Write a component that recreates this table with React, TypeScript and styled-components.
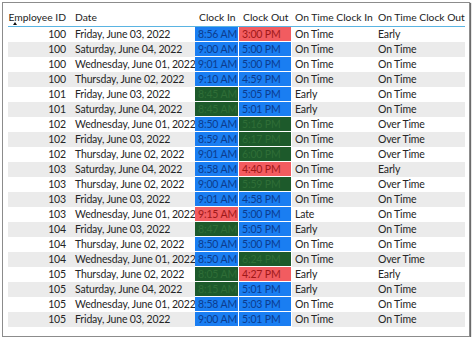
import styled, { createGlobalStyle } from "styled-components";

const Global = createGlobalStyle`
  body {
    margin: 0;
    background: #ffffff;
    font-family: "Lato", "Open Sans", sans-serif;
  }
`;

const Frame = styled.div`
  margin: 2px 0 0 2px;
  height: 333px;
  border: 1px solid #8c8c8c;
  box-shadow: 1px 1px 1px #6a6a6a;
  padding: 0 4px 0 5px;
  box-sizing: content-box;
  width: 457px;
`;

const cols = "62px 125px 44px 53px 82px 91px";

const HeaderRow = styled.div`
  display: grid;
  grid-template-columns: ${cols};
  height: 23px;
  border-bottom: 1px solid #5ab4e2;
  font-size: 10.3px;
  color: #222;
`;

const HeadCell = styled.div<{ $right?: boolean; $pad?: number }>`
  position: relative;
  padding-top: 7px;
  line-height: 14px;
  white-space: nowrap;
  text-align: ${(p) => (p.$right ? "right" : "left")};
  padding-left: ${(p) => p.$pad ?? 0}px;
  padding-right: ${(p) => (p.$right ? 4 : 0)}px;
`;

const SortArrow = styled.span`
  position: absolute;
  left: 5px;
  top: 19px;
  width: 0;
  height: 0;
  border-left: 2.5px solid transparent;
  border-right: 2.5px solid transparent;
  border-bottom: 3px solid #111;
`;

const Row = styled.div<{ $alt: boolean }>`
  display: grid;
  grid-template-columns: ${cols};
  height: 15px;
  background: ${(p) => (p.$alt ? "#ebebeb" : "#ffffff")};
  font-size: 10.5px;
  letter-spacing: -0.15px;
  color: #252525;
  line-height: 15px;
`;

const Cell = styled.div<{ $right?: boolean; $pad?: number }>`
  white-space: nowrap;
  overflow: hidden;
  text-align: ${(p) => (p.$right ? "right" : "left")};
  padding-left: ${(p) => p.$pad ?? 0}px;
  padding-right: ${(p) => (p.$right ? 4 : 0)}px;
`;

type Tone = "b" | "r" | "g";

const toneBg: Record<Tone, string> = { b: "#1a7ef2", r: "#f25c60", g: "#1d5a2b" };
const toneFg: Record<Tone, string> = { b: "#0c3c8e", r: "#a01818", g: "#2f6e37" };

const TimeCell = styled.div<{ $tone: Tone }>`
  background: ${(p) => toneBg[p.$tone]};
  color: ${(p) => toneFg[p.$tone]};
  border-bottom: 1px solid #ffffff;
  border-right: 1px solid #ffffff;
  padding-left: 3px;
  line-height: 14px;
  white-space: nowrap;
  overflow: hidden;
`;

type Rec = [string, string, string, Tone, string, Tone, string, string];

const rows: Rec[] = [
  ["100", "Friday, June 03, 2022", "8:56 AM", "b", "3:00 PM", "r", "On Time", "Early"],
  ["100", "Saturday, June 04, 2022", "9:00 AM", "b", "5:00 PM", "b", "On Time", "On Time"],
  ["100", "Wednesday, June 01, 2022", "9:01 AM", "b", "5:00 PM", "b", "On Time", "On Time"],
  ["100", "Thursday, June 02, 2022", "9:10 AM", "b", "4:59 PM", "b", "On Time", "On Time"],
  ["101", "Friday, June 03, 2022", "8:45 AM", "g", "5:05 PM", "b", "Early", "On Time"],
  ["101", "Saturday, June 04, 2022", "8:45 AM", "g", "5:01 PM", "b", "Early", "On Time"],
  ["102", "Wednesday, June 01, 2022", "8:50 AM", "b", "5:16 PM", "g", "On Time", "Over Time"],
  ["102", "Friday, June 03, 2022", "8:59 AM", "b", "6:17 PM", "g", "On Time", "Over Time"],
  ["102", "Thursday, June 02, 2022", "9:01 AM", "b", "6:00 PM", "g", "On Time", "Over Time"],
  ["103", "Saturday, June 04, 2022", "8:58 AM", "b", "4:40 PM", "r", "On Time", "Early"],
  ["103", "Thursday, June 02, 2022", "9:00 AM", "b", "5:59 PM", "g", "On Time", "Over Time"],
  ["103", "Friday, June 03, 2022", "9:01 AM", "b", "4:58 PM", "b", "On Time", "On Time"],
  ["103", "Wednesday, June 01, 2022", "9:15 AM", "r", "5:00 PM", "b", "Late", "On Time"],
  ["104", "Friday, June 03, 2022", "8:47 AM", "g", "5:05 PM", "b", "Early", "On Time"],
  ["104", "Thursday, June 02, 2022", "8:50 AM", "b", "5:00 PM", "b", "On Time", "On Time"],
  ["104", "Wednesday, June 01, 2022", "8:50 AM", "b", "6:24 PM", "g", "On Time", "Over Time"],
  ["105", "Thursday, June 02, 2022", "8:05 AM", "g", "4:27 PM", "r", "Early", "Early"],
  ["105", "Saturday, June 04, 2022", "8:15 AM", "g", "5:01 PM", "b", "Early", "On Time"],
  ["105", "Wednesday, June 01, 2022", "8:58 AM", "b", "5:03 PM", "b", "On Time", "On Time"],
  ["105", "Friday, June 03, 2022", "9:00 AM", "b", "5:01 PM", "b", "On Time", "On Time"],
];

function App() {
  return (
    <>
      <Global />
      <Frame>
        <HeaderRow>
          <HeadCell $right>
            Employee ID
            <SortArrow />
          </HeadCell>
          <HeadCell $pad={5}>Date</HeadCell>
          <HeadCell $pad={4}>Clock In</HeadCell>
          <HeadCell $pad={4}>Clock Out</HeadCell>
          <HeadCell $pad={3}>On Time Clock In</HeadCell>
          <HeadCell $pad={4}>On Time Clock Out</HeadCell>
        </HeaderRow>
        {rows.map((r, i) => (
          <Row key={i} $alt={i % 2 === 1}>
            <Cell $right>{r[0]}</Cell>
            <Cell $pad={5}>{r[1]}</Cell>
            <TimeCell $tone={r[3]}>{r[2]}</TimeCell>
            <TimeCell $tone={r[5]}>{r[4]}</TimeCell>
            <Cell $pad={3}>{r[6]}</Cell>
            <Cell $pad={4}>{r[7]}</Cell>
          </Row>
        ))}
      </Frame>
    </>
  );
}

export default App;
